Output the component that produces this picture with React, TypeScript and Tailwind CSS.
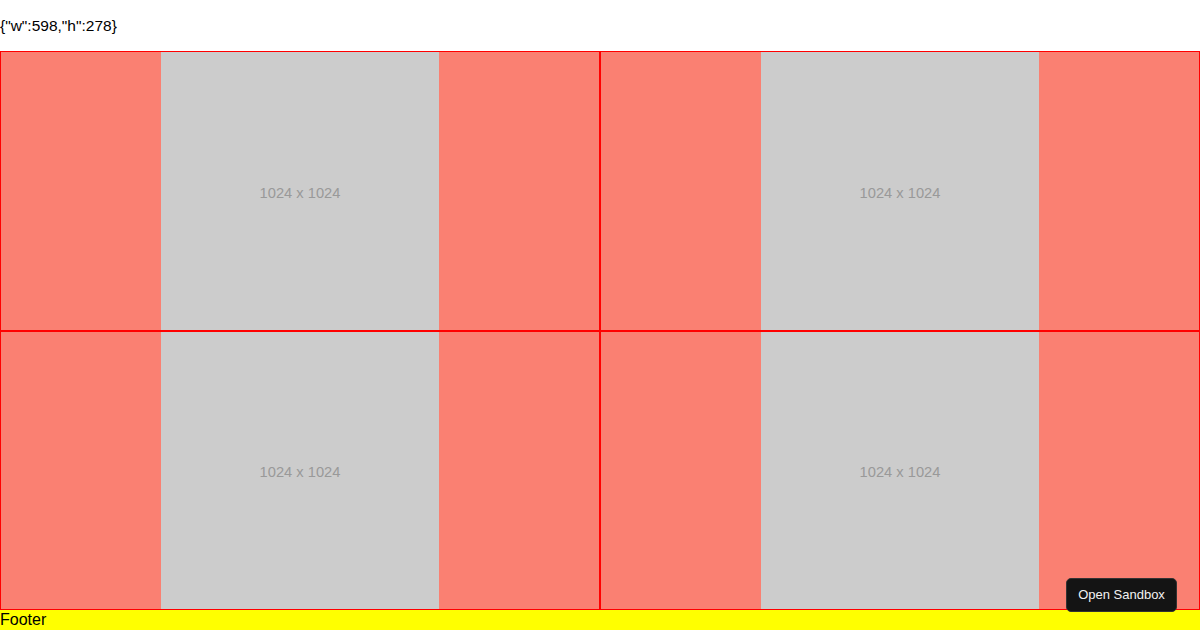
import React from 'react'

const cells = [0, 1, 2, 3]

function Cell() {
  return (
    <div className="border border-[#ff0000] bg-[#fa8072] flex justify-center min-h-0 overflow-hidden">
      <div className="h-full aspect-square bg-[#cccccc] flex items-center justify-center pt-[4px] text-[14.7px] text-[#999999]">
        1024 x 1024
      </div>
    </div>
  )
}

export default function App() {
  return (
    <div className="h-screen w-full flex flex-col bg-white text-black font-['Liberation_Sans',Arial,sans-serif]">
      {/* Header showing measured cell size */}
      <div className="h-[51px] shrink-0 flex items-center text-[15.5px]">{'{"w":598,"h":278}'}</div>

      {/* 2x2 grid */}
      <div className="flex-1 min-h-0 grid grid-cols-2 grid-rows-2">
        {cells.map((c) => (
          <Cell key={c} />
        ))}
      </div>

      {/* Footer */}
      <div className="h-[20px] shrink-0 bg-[#ffff00] text-base leading-[20px]">Footer</div>

      {/* Floating button */}
      <button className="fixed right-[23px] bottom-[18px] h-[34px] w-[111px] rounded-[5px] bg-[#141414] border border-[#333333] text-[13px] text-[#f2f2f2] flex items-center justify-center">
        Open Sandbox
      </button>
    </div>
  )
}
